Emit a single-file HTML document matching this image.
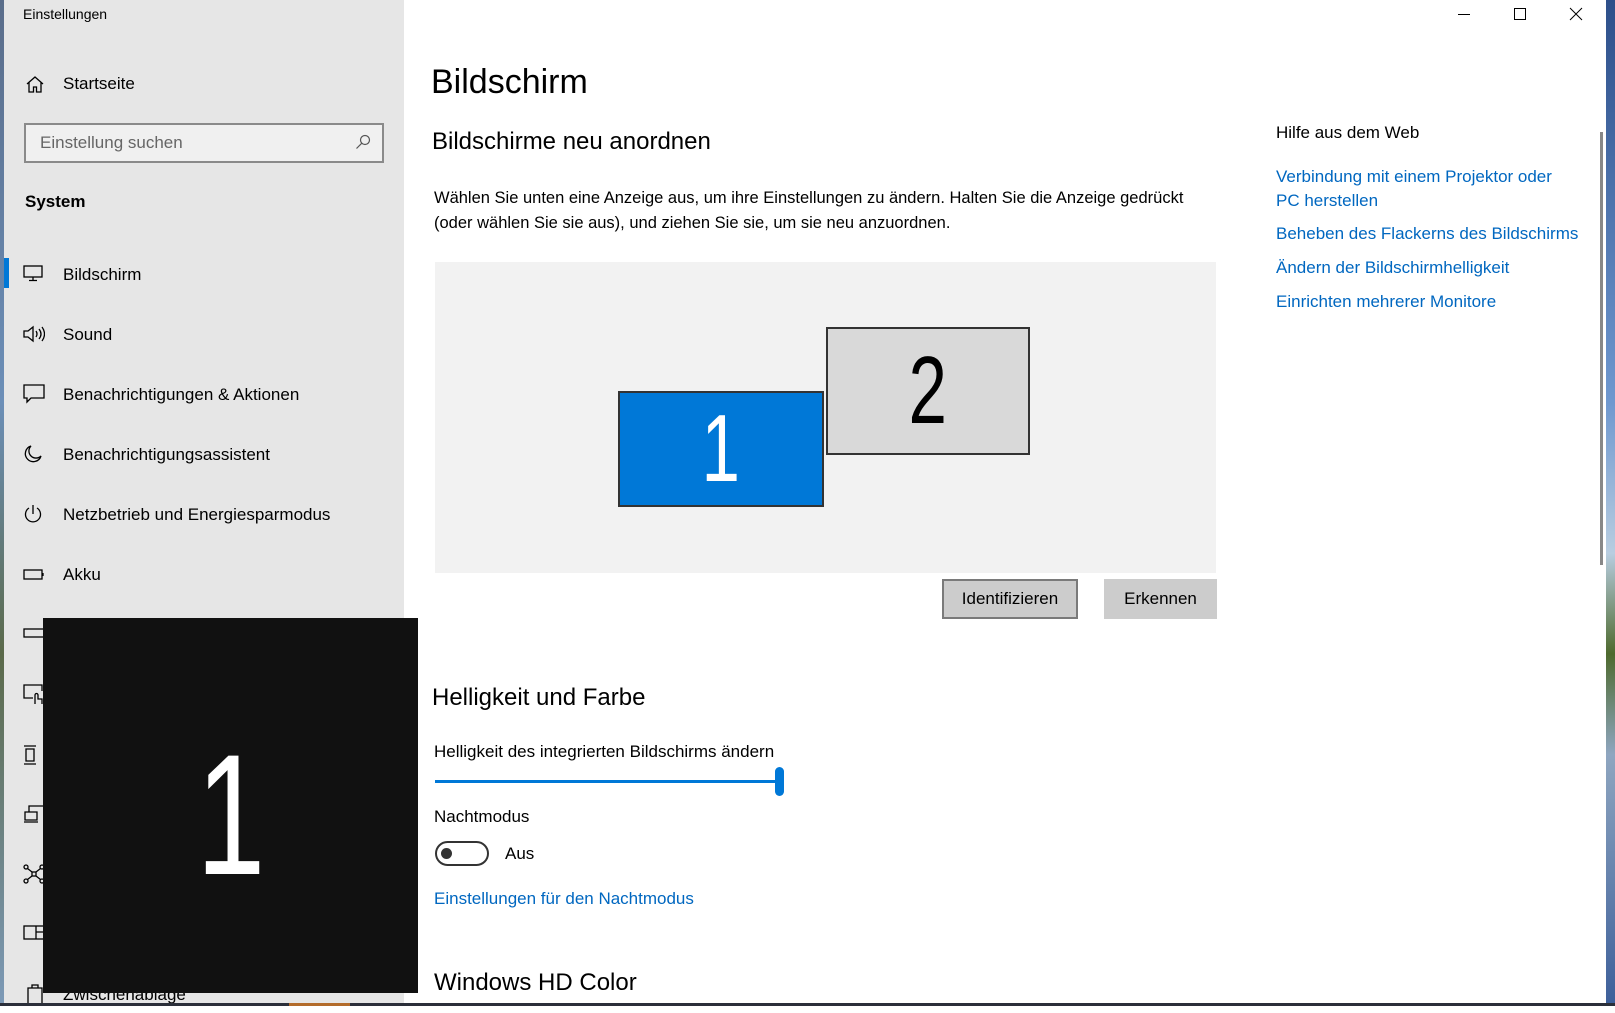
<!DOCTYPE html>
<html><head><meta charset="utf-8"><style>
*{margin:0;padding:0;box-sizing:border-box}
body{width:1615px;height:1006px;overflow:hidden;position:relative;font-family:"Liberation Sans",sans-serif;color:#000;background:#fff}
.a{position:absolute;white-space:nowrap}
.nav{font-size:17px;left:63px}
.ic{position:absolute;left:23px;width:22px;height:18px}
.lnk{color:#0067c0;font-size:17px}
.thin{display:inline-block;transform:scaleX(0.72)}
</style></head><body>
<div class="a" style="left:0;top:0;width:4px;height:1006px;background:linear-gradient(#5a6d8a,#6c8fb8 40%,#5b6a4a 65%,#7d9ab8)"></div>
<div class="a" style="left:1606px;top:0;width:9px;height:1006px;background:linear-gradient(#2d4f8a,#6f98cf 40%,#b8cde0 55%,#4e6a2e 65%,#8fa6c0 75%,#3d5f9a)"></div>
<div class="a" style="left:4px;top:0;width:400px;height:1003px;background:#e6e6e6"></div>
<div class="a" style="left:23px;top:6px;font-size:14px">Einstellungen</div>
<svg class="a" style="left:25px;top:75px" width="20" height="19" viewBox="0 0 20 19" fill="none" stroke="#000" stroke-width="1.3"><path d="M2 9L10 2l8 7M4 7.5V17h4.5v-5h3v5H16V7.5"/></svg>
<div class="a nav" style="top:74px">Startseite</div>
<div class="a" style="left:24px;top:123px;width:360px;height:40px;border:2px solid #8a8a8a;background:#f0f0f0"></div>
<div class="a" style="left:40px;top:133px;font-size:17px;color:#666">Einstellung suchen</div>
<svg class="a" style="left:355px;top:134px" width="16" height="16" viewBox="0 0 16 16" fill="none" stroke="#555" stroke-width="1.2"><circle cx="10" cy="6" r="4.5"/><path d="M6.8 9.2L1.5 14.5"/></svg>
<div class="a" style="left:25px;top:192px;font-size:17px;font-weight:bold">System</div>
<div class="a" style="left:4px;top:258px;width:5px;height:30px;background:#0078d7"></div>
<svg class="a" style="left:23px;top:265px" width="20" height="17" viewBox="0 0 20 17" fill="none" stroke="#000" stroke-width="1.3"><rect x="1" y="1" width="18" height="11"/><path d="M10 12v3M6 15.5h8"/></svg>
<div class="a nav" style="top:265px">Bildschirm</div>
<svg class="a" style="left:23px;top:325px" width="22" height="18" viewBox="0 0 22 18" fill="none" stroke="#000" stroke-width="1.3"><path d="M1 6h4l5-4v14l-5-4H1z"/><path d="M13 6q2 3 0 6M16 4q4 5 0 10M19 2q5 7 0 14"/></svg>
<div class="a nav" style="top:325px">Sound</div>
<svg class="a" style="left:23px;top:384px" width="22" height="20" viewBox="0 0 22 20" fill="none" stroke="#000" stroke-width="1.3"><path d="M1 1h20v13H8l-4 4v-4H1z"/></svg>
<div class="a nav" style="top:385px">Benachrichtigungen &amp; Aktionen</div>
<svg class="a" style="left:23px;top:444px" width="20" height="20" viewBox="0 0 20 20" fill="none" stroke="#000" stroke-width="1.3"><path d="M8 2a8 8 0 1 0 10 10A7 7 0 0 1 8 2z"/></svg>
<div class="a nav" style="top:445px">Benachrichtigungsassistent</div>
<svg class="a" style="left:23px;top:504px" width="20" height="20" viewBox="0 0 20 20" fill="none" stroke="#000" stroke-width="1.3"><path d="M10 1v9M6 4a7.5 7.5 0 1 0 8 0"/></svg>
<div class="a nav" style="top:505px">Netzbetrieb und Energiesparmodus</div>
<svg class="a" style="left:23px;top:569px" width="22" height="12" viewBox="0 0 22 12" fill="none" stroke="#000" stroke-width="1.3"><rect x="1" y="1" width="18" height="9"/><path d="M20 4v3"/></svg>
<div class="a nav" style="top:565px">Akku</div>
<svg class="a" style="left:23px;top:628px" width="22" height="12" viewBox="0 0 22 12" fill="none" stroke="#000" stroke-width="1.3"><rect x="1" y="1" width="20" height="8"/></svg>
<svg class="a" style="left:23px;top:684px" width="22" height="22" viewBox="0 0 22 22" fill="none" stroke="#000" stroke-width="1.3"><path d="M10 14H1V1h18v6"/><path d="M12 20v-9a1.5 1.5 0 0 1 3 0v4h4v5"/></svg>
<svg class="a" style="left:23px;top:744px" width="22" height="22" viewBox="0 0 22 22" fill="none" stroke="#000" stroke-width="1.3"><path d="M1 2h12M1 20h12M3 5h8v12H3z"/></svg>
<svg class="a" style="left:23px;top:804px" width="22" height="20" viewBox="0 0 22 20" fill="none" stroke="#000" stroke-width="1.3"><path d="M6 8V2h16M2 8h12v8H2zM1 18h14"/></svg>
<svg class="a" style="left:23px;top:864px" width="22" height="20" viewBox="0 0 22 20" fill="none" stroke="#000" stroke-width="1.3"><circle cx="3" cy="3" r="2"/><circle cx="19" cy="3" r="2"/><circle cx="3" cy="17" r="2"/><circle cx="19" cy="17" r="2"/><rect x="9" y="8" width="4" height="4"/><path d="M4.5 4.5L9 8M17.5 4.5L13 8M4.5 15.5L9 12M17.5 15.5L13 12"/></svg>
<svg class="a" style="left:23px;top:925px" width="22" height="16" viewBox="0 0 22 16" fill="none" stroke="#000" stroke-width="1.3"><rect x="1" y="1" width="20" height="13"/><path d="M13 1v13M13 7h8"/></svg>
<svg class="a" style="left:25px;top:984px" width="20" height="20" viewBox="0 0 20 20" fill="none" stroke="#000" stroke-width="1.3"><path d="M3 4h14v16H3zM7 4V1h6v3"/></svg>
<div class="a nav" style="top:985px">Zwischenablage</div>
<svg class="a" style="left:1456px;top:6px" width="130" height="16" viewBox="0 0 130 16" fill="none" stroke="#000" stroke-width="1"><path d="M2 8.5h12"/><rect x="58.5" y="2.5" width="11" height="11"/><path d="M114 2l12 12M126 2l-12 12"/></svg>
<div class="a" style="left:1600px;top:132px;width:3px;height:433px;background:#888"></div>
<div class="a" style="left:431px;top:63px;font-size:34px">Bildschirm</div>
<div class="a" style="left:432px;top:128px;font-size:24px">Bildschirme neu anordnen</div>
<div class="a" style="left:434px;top:186px;font-size:16.5px;line-height:25px">Wählen Sie unten eine Anzeige aus, um ihre Einstellungen zu ändern. Halten Sie die Anzeige gedrückt<br>(oder wählen Sie sie aus), und ziehen Sie sie, um sie neu anzuordnen.</div>
<div class="a" style="left:435px;top:262px;width:781px;height:311px;background:#f2f2f2"></div>
<div class="a" style="left:826px;top:327px;width:204px;height:128px;background:#d9d9d9;border:2px solid #333;font-size:96px;text-align:center;line-height:124px"><span class="thin">2</span></div>
<div class="a" style="left:618px;top:391px;width:206px;height:116px;background:#0078d7;border:2px solid #333;font-size:96px;text-align:center;line-height:112px;color:#fff"><span class="thin">1</span></div>
<div class="a" style="left:942px;top:579px;width:136px;height:40px;background:#ccc;border:2px solid #7a7a7a;font-size:17px;text-align:center;line-height:36px">Identifizieren</div>
<div class="a" style="left:1104px;top:579px;width:113px;height:40px;background:#ccc;font-size:17px;text-align:center;line-height:40px">Erkennen</div>
<div class="a" style="left:432px;top:684px;font-size:24px">Helligkeit und Farbe</div>
<div class="a" style="left:434px;top:742px;font-size:17px">Helligkeit des integrierten Bildschirms ändern</div>
<div class="a" style="left:435px;top:780px;width:343px;height:3px;background:#0078d7"></div>
<div class="a" style="left:775px;top:767px;width:9px;height:29px;border-radius:5px;background:#0078d7"></div>
<div class="a" style="left:434px;top:807px;font-size:17px">Nachtmodus</div>
<div class="a" style="left:435px;top:841px;width:54px;height:25px;border:2px solid #333;border-radius:13px"></div>
<div class="a" style="left:441px;top:848px;width:11px;height:11px;border-radius:50%;background:#333"></div>
<div class="a" style="left:505px;top:844px;font-size:17px">Aus</div>
<div class="a lnk" style="left:434px;top:889px">Einstellungen für den Nachtmodus</div>
<div class="a" style="left:434px;top:969px;font-size:24px">Windows HD Color</div>
<div class="a" style="left:1276px;top:123px;font-size:17px">Hilfe aus dem Web</div>
<div class="a lnk" style="left:1276px;top:165px;line-height:24px">Verbindung mit einem Projektor oder<br>PC herstellen</div>
<div class="a lnk" style="left:1276px;top:224px">Beheben des Flackerns des Bildschirms</div>
<div class="a lnk" style="left:1276px;top:258px">Ändern der Bildschirmhelligkeit</div>
<div class="a lnk" style="left:1276px;top:292px">Einrichten mehrerer Monitore</div>
<div class="a" style="left:43px;top:618px;width:375px;height:375px;background:#111;color:#fff;font-size:172px;text-align:center;line-height:395px"><span class="thin">1</span></div>
<div class="a" style="left:0;top:1003px;width:1615px;height:3px;background:#2b2f3a"></div>
<div class="a" style="left:289px;top:1003px;width:61px;height:3px;background:#b36b2a"></div>
</body></html>
